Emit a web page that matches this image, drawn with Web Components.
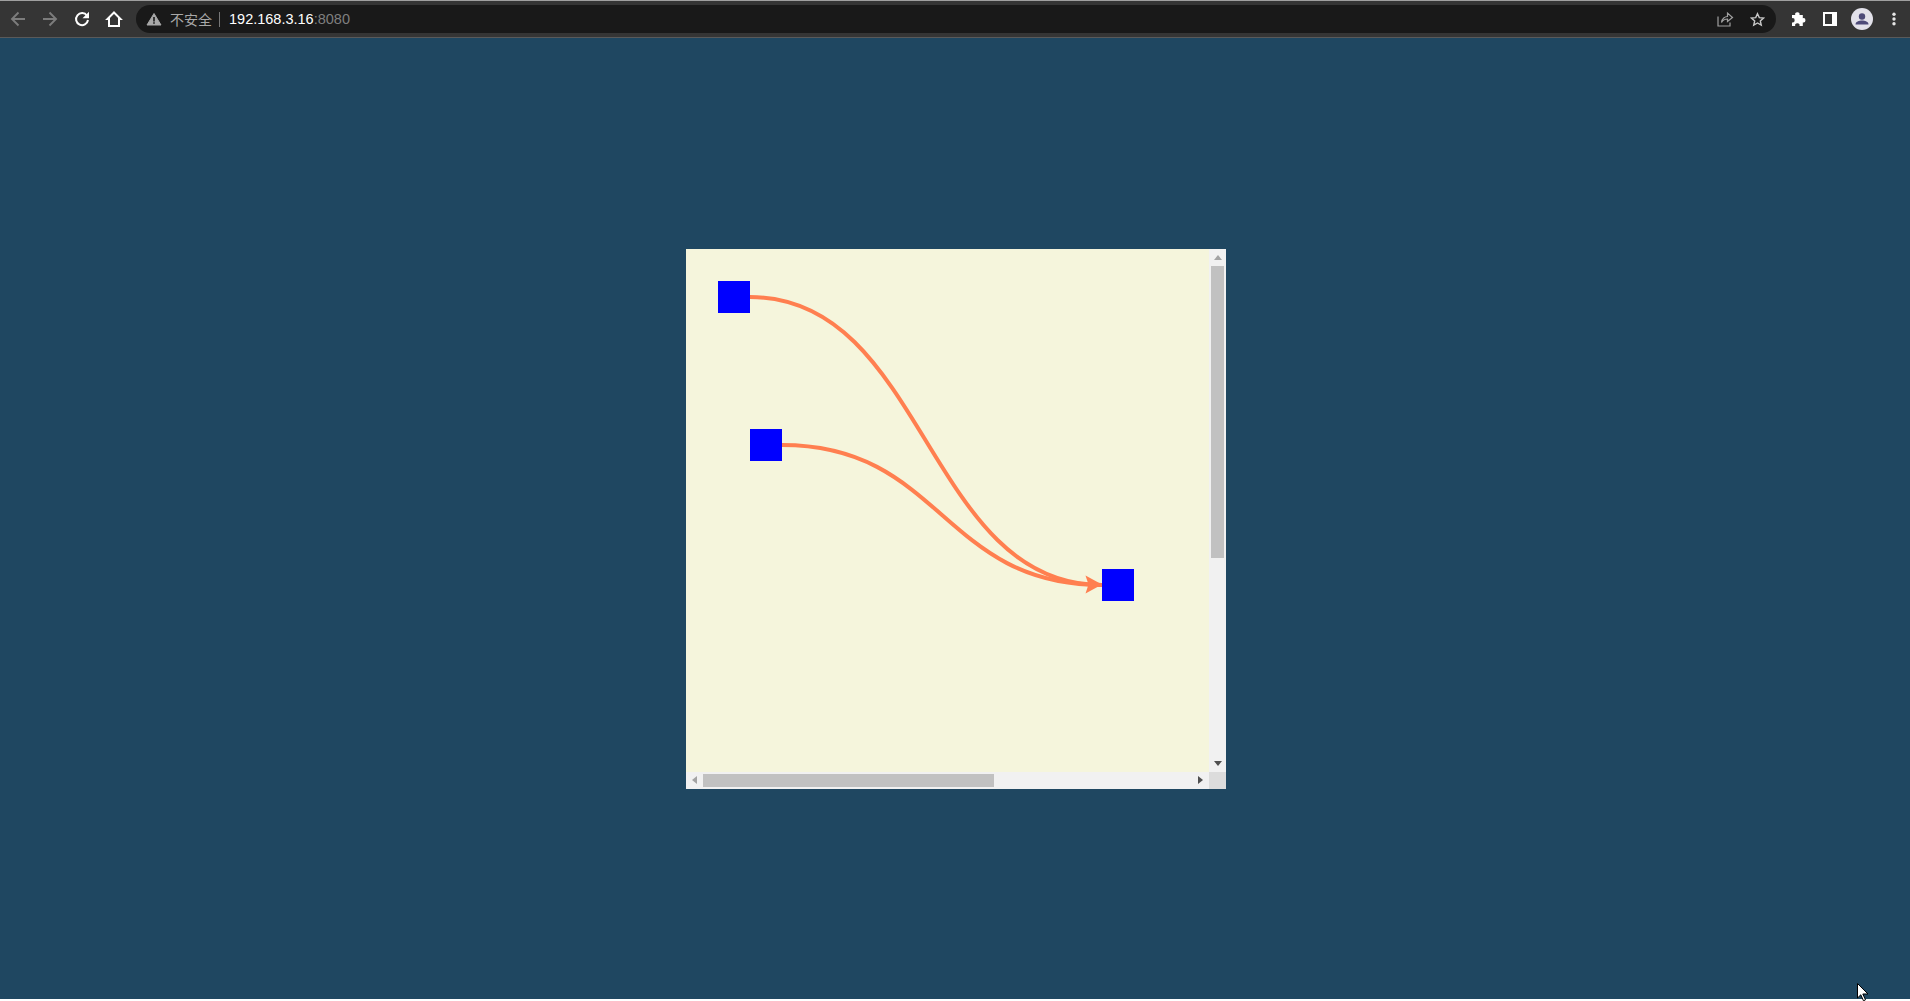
<!DOCTYPE html>
<html>
<head>
<meta charset="utf-8">
<title>192.168.3.16:8080</title>
<style>
    html, body { margin: 0; height: 100%; overflow: hidden; background: #1f4761; }
    body { display: flex; flex-direction: column; font-family: "Liberation Sans", "Noto Sans CJK SC", sans-serif; }
</style>
</head>
<body>
<browser-toolbar host="192.168.3.16" port=":8080" warning="不安全"></browser-toolbar>
<page-stage>
    <scroll-box>
        <flow-canvas></flow-canvas>
    </scroll-box>
</page-stage>
<mouse-cursor></mouse-cursor>

<script>
// Chrome style top bar with nav buttons, address pill and the extension icons
class BrowserToolbar extends HTMLElement {
    constructor() {
        super();
        this.attachShadow({ mode: "open" });
        const warning = this.getAttribute("warning");
        const host = this.getAttribute("host");
        const port = this.getAttribute("port");
        this.shadowRoot.innerHTML = `
        <style>
            :host { display: flex; align-items: center; height: 36px; border-top: 1px solid #a0a0a0; border-bottom: 1px solid #5a5a5a; background: #353535; font-family: "Liberation Sans", "Noto Sans CJK SC", sans-serif; flex: none; }
            svg { display: block; flex: none; }
            .slot { width: 32px; height: 28px; display: flex; align-items: center; justify-content: center; flex: none; }
            .nav { display: flex; align-items: center; padding-left: 2px; }
            .pill { flex: 1; display: flex; align-items: center; height: 28px; margin: 0 6px; border-radius: 14px; background: #191919; padding: 0 2px 0 10px; }
            .warn { color: #a8a8a8; font-size: 14px; margin-left: 8px; }
            .sep { width: 1px; height: 15px; background: #777; margin: 0 9px 0 7px; }
            .host { color: #fff; font-size: 14.5px; }
            .port { color: #7f7f7f; font-size: 14.5px; }
            .grow { flex: 1; }
            .tools { display: flex; align-items: center; }
        </style>
        <div class="nav">
            <div class="slot"><svg width="16" height="16" viewBox="0 0 16 16" fill="none" stroke="#7c7c7c" stroke-width="1.900"><path d="M15 8H2M8.500 1.500L2 8l6.500 6.500"/></svg></div>
            <div class="slot"><svg width="16" height="16" viewBox="0 0 16 16" fill="none" stroke="#7c7c7c" stroke-width="1.900"><path d="M1 8h13M7.500 1.500L14 8l-6.500 6.500"/></svg></div>
            <div class="slot"><svg width="16" height="16" viewBox="0 0 16 16" fill="none" stroke="#fff" stroke-width="2"><path d="M13 4.700A6 6 0 1 0 14 9"/><path d="M15 .8v6.500H8.500z" fill="#fff" stroke="none"/></svg></div>
            <div class="slot"><svg width="18" height="18" viewBox="0 0 18 18" fill="none" stroke="#fff" stroke-width="2"><path d="M9 2.500L15.500 9H14v7H4V9H2.500z"/></svg></div>
        </div>
        <div class="pill">
            <svg width="16" height="16" viewBox="0 0 16 16"><path d="M8 2.500L15 14H1z" fill="#a8a8a8" stroke="#a8a8a8" stroke-linejoin="round"/><path d="M7.200 6h1.600v4.500H7.200zM7.200 11.300h1.600v1.500H7.200z" fill="#191919"/></svg>
            <span class="warn">${warning}</span>
            <span class="sep"></span>
            <span class="host">${host}</span><span class="port">${port}</span>
            <span class="grow"></span>
            <div class="slot"><svg width="18" height="18" viewBox="0 0 18 18" fill="none" stroke="#a0a0a0" stroke-width="1.200"><path d="M2 6.500V16H14V12.500"/><path d="M5.500 12.500C6 8.500 9 6.500 11.500 6.500V3L16.500 7.500 11.500 11.500V9C9 9 7 10 5.500 12.500z"/></svg></div>
            <div class="slot" style="width:33px"><svg width="15" height="15" viewBox="0 0 16 16" fill="none" stroke="#c8c8c8" stroke-width="1.500"><path d="M8 1.800l1.900 4.200 4.500.5-3.400 3 1 4.500L8 11.700 4 14l1-4.500-3.400-3 4.500-.5z"/></svg></div>
        </div>
        <div class="tools">
            <div class="slot"><svg width="16" height="16" viewBox="0 0 16 16" fill="#fff"><path d="M2 4h3.200a2.200 2.200 0 1 1 4.300 0h3.300v3.200a2.200 2.200 0 1 1 0 4.300V15H9.500a2.200 2.200 0 1 0-4.300 0H2v-3.500a2.200 2.200 0 1 0 0-4.300z"/></svg></div>
            <div class="slot"><svg width="14" height="14" viewBox="0 0 14 14"><path d="M1 1h12v12H1z" fill="none" stroke="#fff" stroke-width="2"/><path d="M9 1h4v12H9z" fill="#fff"/></svg></div>
            <div class="slot"><svg width="22" height="22" viewBox="0 0 22 22"><circle cx="11" cy="11" r="11" fill="#e2e1ea"/><circle cx="11" cy="8.500" r="3.200" fill="#4d4a78"/><path d="M4.500 16.500c0-3 3.500-4 6.500-4s6.500 1 6.500 4z" fill="#4d4a78"/></svg></div>
            <div class="slot"><svg width="6" height="16" viewBox="0 0 6 16" fill="#e6e6e6"><circle cx="3" cy="3.200" r="1.700"/><circle cx="3" cy="8" r="1.700"/><circle cx="3" cy="12.800" r="1.700"/></svg></div>
        </div>
        `;
    }
}

// Centers whatever is passed in on the blue page background
class PageStage extends HTMLElement {
    constructor() {
        super();
        this.attachShadow({ mode: "open" });
        this.shadowRoot.innerHTML = `
        <style>
            :host { flex: 1; display: flex; align-items: center; justify-content: center; background: #1f4761; border-bottom: 2px solid #fff; padding-left: 2px; }
        </style>
        <slot></slot>
        `;
    }
}

// Box with fake classic scrollbars, like an overflow:scroll div
class ScrollBox extends HTMLElement {
    constructor() {
        super();
        this.attachShadow({ mode: "open" });
        this.shadowRoot.innerHTML = `
        <style>
            :host { display: grid; grid-template: 523px 17px / 523px 17px; width: 540px; height: 540px; background: #f1f1f1; }
            .view { overflow: hidden; background: #f5f5dc; }
            .bar { background: #f1f1f1; display: flex; align-items: center; }
            .v { flex-direction: column; }
            .v .thumb { width: 13px; height: 292px; background: #c1c1c1; }
            .h .thumb { height: 13px; width: 291px; background: #c1c1c1; }
            .arrow { flex: none; display: flex; align-items: center; justify-content: center; width: 17px; height: 17px; }
            .grow { flex: 1; }
            .corner { background: #dcdcdc; }
        </style>
        <div class="view"><slot></slot></div>
        <div class="bar v">
            <div class="arrow"><svg width="8" height="5" viewBox="0 0 8 5"><path d="M4 0l4 5H0z" fill="#a3a3a3"/></svg></div>
            <div class="thumb"></div><div class="grow"></div>
            <div class="arrow"><svg width="8" height="5" viewBox="0 0 8 5"><path d="M0 0h8L4 5z" fill="#505050"/></svg></div>
        </div>
        <div class="bar h">
            <div class="arrow"><svg width="5" height="8" viewBox="0 0 5 8"><path d="M5 0v8L0 4z" fill="#a3a3a3"/></svg></div>
            <div class="thumb"></div><div class="grow"></div>
            <div class="arrow"><svg width="5" height="8" viewBox="0 0 5 8"><path d="M0 0l5 4-5 4z" fill="#505050"/></svg></div>
        </div>
        <div class="corner"></div>
        `;
    }
}

// Free canvas: three blue nodes joined by two bezier edges
class FlowCanvas extends HTMLElement {
    constructor() {
        super();
        this.attachShadow({ mode: "open" });
        this.shadowRoot.innerHTML = `
        <style>
            :host { display: block; position: relative; width: 523px; height: 523px; }
            .node { position: absolute; width: 32px; height: 32px; background: #0000ff; }
            svg { position: absolute; left: 0; top: 0; }
        </style>
        <svg width="523" height="523" fill="none" stroke="#ff7f50" stroke-width="4">
            <path d="M64 48C240 48 240 336 416 336"/>
            <path d="M96 196C256 196 256 336 416 336"/>
            <path d="M416 335.500L399.500 326.500 402.500 335.500 399.500 344.500z" fill="#ff7f50" stroke="none"/>
        </svg>
        <div class="node" style="left:32px;top:32px"></div>
        <div class="node" style="left:64px;top:180px"></div>
        <div class="node" style="left:416px;top:320px"></div>
        `;
    }
}

// Mouse pointer caught in the photograph
class MouseCursor extends HTMLElement {
    constructor() {
        super();
        this.attachShadow({ mode: "open" });
        this.shadowRoot.innerHTML = `
        <style>
            :host { position: fixed; left: 1857px; top: 983px; width: 14px; height: 18px; }
        </style>
        <svg width="14" height="18" viewBox="0 0 14 18"><path d="M.5 .5V15l3.300-3.200 2.700 6 2-1-2.700-5.800h5.200z" fill="#fff" stroke="#000" stroke-width="1"/></svg>
        `;
    }
}

customElements.define("browser-toolbar", BrowserToolbar);
customElements.define("page-stage", PageStage);
customElements.define("scroll-box", ScrollBox);
customElements.define("flow-canvas", FlowCanvas);
customElements.define("mouse-cursor", MouseCursor);
</script>
</body>
</html>
